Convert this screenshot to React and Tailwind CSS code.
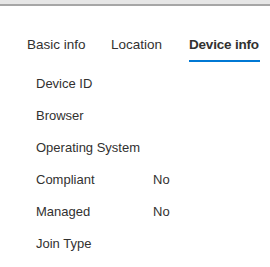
export default function App() {
  const rows = [
    ['Device ID', ''],
    ['Browser', ''],
    ['Operating System', ''],
    ['Compliant', 'No'],
    ['Managed', 'No'],
    ['Join Type', ''],
  ];

  return (
    <div className="w-[270px] h-[267px] bg-white text-[#323130] overflow-hidden" style={{ fontFamily: '"Segoe UI", "Liberation Sans", sans-serif' }}>
      <div className="h-[4px] bg-[#e6e6e6]"></div>
      <div className="h-[2px] bg-[#a6a6a6]"></div>

      <div className="flex pl-[27px] pt-[29px] text-[13.5px] leading-[20px]">
        <div className="w-[84px] pb-[7px]">Basic info</div>
        <div className="w-[78px] pb-[7px]">Location</div>
        <div className="w-[71px] pb-[5px] font-semibold whitespace-nowrap tracking-[-0.2px] border-b-2 border-[#0078d4]">Device info</div>
      </div>

      <div className="mt-[6px] pl-[36px] text-[13px] leading-[20px]">
        {rows.map(([label, value]) => (
          <div key={label} className="flex items-center h-[32px]">
            <div className="w-[117px]">{label}</div>
            <div>{value}</div>
          </div>
        ))}
      </div>
    </div>
  );
}
